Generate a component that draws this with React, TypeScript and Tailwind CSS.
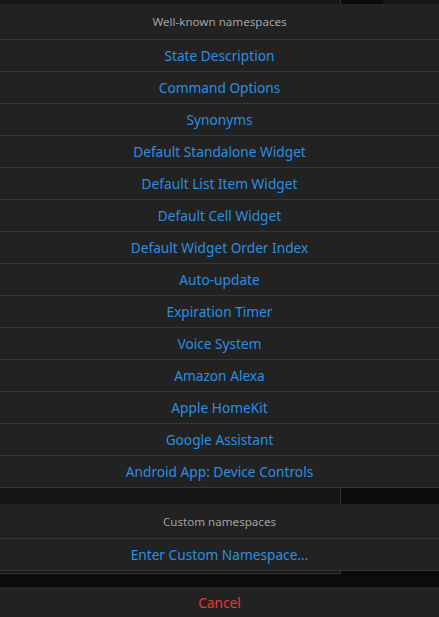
import React from "react";

const items = [
  "State Description",
  "Command Options",
  "Synonyms",
  "Default Standalone Widget",
  "Default List Item Widget",
  "Default Cell Widget",
  "Default Widget Order Index",
  "Auto-update",
  "Expiration Timer",
  "Voice System",
  "Amazon Alexa",
  "Apple HomeKit",
  "Google Assistant",
  "Android App: Device Controls",
];

export default function App() {
  return (
    <div
      className="relative w-[439px] h-[617px] overflow-hidden bg-[#0b0b0b]"
      style={{ fontFamily: '"Noto Sans", "Open Sans", sans-serif' }}
    >
      {/* dimmed page behind the sheet */}
      <div className="flex">
        <div className="w-[341px] h-[574px] bg-[#151515] border-r border-b border-[#343434]" />
        <div className="flex-1">
          <div className="ml-[42px] h-[20px] bg-[#161616]" />
        </div>
      </div>

      {/* action sheet overlay */}
      <div className="absolute inset-x-0 top-[4px] flex flex-col gap-[16px]">
        <div className="bg-[#222222] border-b border-[#363636]">
          <div className="h-[35px] pt-[1px] flex items-center justify-center text-[11.6px] text-[#a0a0a0]">
            Well-known namespaces
          </div>
          {items.map((t) => (
            <div
              key={t}
              className="h-[32px] pt-[2px] border-t border-[#363636] flex items-center justify-center text-[13.7px] text-[#2b8fe0]"
            >
              {t}
            </div>
          ))}
        </div>

        <div className="bg-[#222222] border-b border-[#363636]">
          <div className="h-[34px] pt-[1px] flex items-center justify-center text-[11.6px] text-[#a0a0a0]">
            Custom namespaces
          </div>
          <div className="h-[32px] pt-[2px] border-t border-[#363636] flex items-center justify-center text-[13.7px] text-[#2b8fe0]">
            Enter Custom Namespace...
          </div>
        </div>

        <div className="bg-[#222222] h-[40px] flex items-start pt-[6px] justify-center text-[13.7px] text-[#e53935]">
          Cancel
        </div>
      </div>
    </div>
  );
}
